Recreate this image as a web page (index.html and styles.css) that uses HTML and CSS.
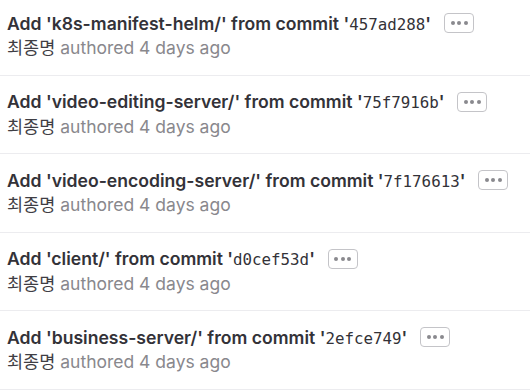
FILE: index.html
```html
<!DOCTYPE html>
<html>
<head>
<meta charset="utf-8">
<link rel="stylesheet" href="styles.css">
</head>
<body>
<ul class="commits">
  <li class="commit">
    <div class="title-row"><span class="title">Add 'k8s-manifest-helm/' from commit '<code>457ad288</code>'</span><button class="more"><span></span><span></span><span></span></button></div>
    <div class="meta"><span class="author">최종명</span> authored 4 days ago</div>
  </li>
  <li class="commit">
    <div class="title-row"><span class="title">Add 'video-editing-server/' from commit '<code>75f7916b</code>'</span><button class="more"><span></span><span></span><span></span></button></div>
    <div class="meta"><span class="author">최종명</span> authored 4 days ago</div>
  </li>
  <li class="commit">
    <div class="title-row"><span class="title">Add 'video-encoding-server/' from commit '<code>7f176613</code>'</span><button class="more"><span></span><span></span><span></span></button></div>
    <div class="meta"><span class="author">최종명</span> authored 4 days ago</div>
  </li>
  <li class="commit">
    <div class="title-row"><span class="title">Add 'client/' from commit '<code>d0cef53d</code>'</span><button class="more"><span></span><span></span><span></span></button></div>
    <div class="meta"><span class="author">최종명</span> authored 4 days ago</div>
  </li>
  <li class="commit">
    <div class="title-row"><span class="title">Add 'business-server/' from commit '<code>2efce749</code>'</span><button class="more"><span></span><span></span><span></span></button></div>
    <div class="meta"><span class="author">최종명</span> authored 4 days ago</div>
  </li>
</ul>
</body>
</html>
```
FILE: styles.css
```css
html, body {
  margin: 0;
  padding: 0;
  background: #fff;
}
body {
  font-family: Inter, "Noto Sans CJK KR", sans-serif;
  color: #333238;
  overflow: hidden;
}
.commits {
  list-style: none;
  margin: -3px 0 0 0;
  padding: 0;
}
.commit {
  padding: 14px 7px 0 7px;
  height: 63.5px;
  border-bottom: 1px solid #ececef;
}
.title-row {
  display: flex;
  align-items: center;
  height: 24px;
}
.title {
  font-size: 17.6px;
  font-weight: 600;
  color: #333238;
  white-space: nowrap;
}
.title code {
  font-family: "DejaVu Sans Mono", monospace;
  font-weight: 400;
  font-size: 15.8px;
}
.more {
  margin-left: 13px;
  width: 30px;
  height: 20px;
  border: 1px solid #c4c4c8;
  border-radius: 4px;
  background: #fff;
  padding: 0;
  display: flex;
  align-items: center;
  justify-content: center;
  gap: 2.5px;
}
.more span {
  width: 4px;
  height: 4px;
  border-radius: 50%;
  background: #8a898e;
}
.meta {
  margin-top: 1px;
  font-size: 17.5px;
  color: #89888d;
  line-height: 24px;
}
.author {
  color: #3f3e44;
}
```
